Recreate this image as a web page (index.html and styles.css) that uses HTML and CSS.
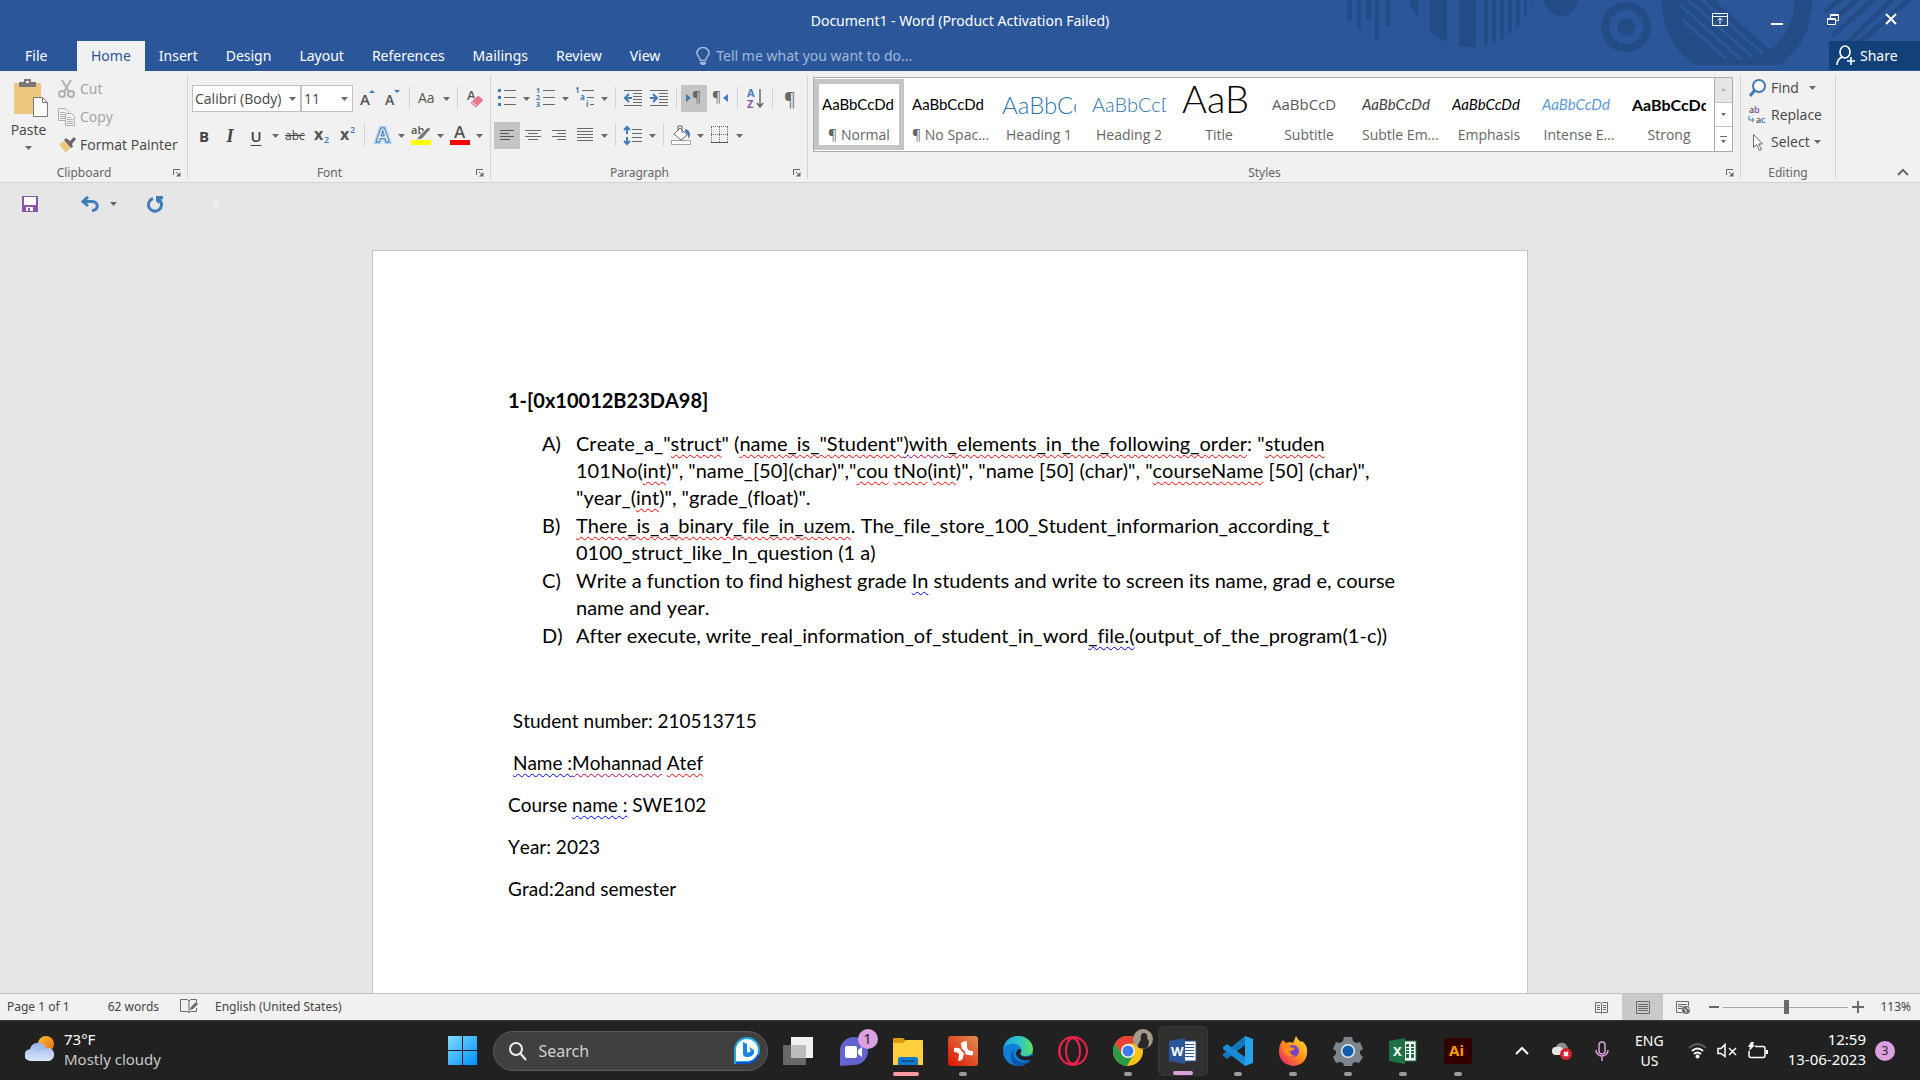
FILE: index.html
```html
<!DOCTYPE html>
<html lang="en">
<head>
    <meta charset="UTF-8">
    <meta name="viewport" content="width=device-width, initial-scale=1.0">
    <title>Document1 - Word</title>
    <link rel="stylesheet" href="styles.css">
</head>
<body>
    <!-- shared symbols -->
    <svg class="symbols" aria-hidden="true">
        <symbol id="arrow" viewBox="0 0 7 4"><path d="M0 0h7L3.500 4z" fill="currentColor"/></symbol>
        <symbol id="launcher" viewBox="0 0 8 8"><path d="M.5 6V.5H7M3 3l3 3" fill="none" stroke="currentColor"/><path d="M7.500 3v4.500H3z" fill="currentColor"/></symbol>
    </svg>

    <header class="top">
        <svg class="top-art" width="580" height="71" viewBox="1340 0 580 71" aria-hidden="true">
            <defs>
                <clipPath id="disc"><circle cx="1471" cy="-17" r="64"/></clipPath>
                <clipPath id="ring"><circle cx="1737" cy="3" r="58"/></clipPath>
                <clipPath id="cut"><rect x="1650" y="0" width="180" height="65"/></clipPath>
            </defs>
            <g fill="#244b86">
                <path d="M1347 0h5v20h-5zM1357 0h4v29h-4zM1366 0h5v20h-5zM1375 0h4v40h-4zM1386 0h4v26h-4z"/>
                <path clip-path="url(#disc)" d="M1407 0h11v60h-11zM1430 0h17v60h-17zM1459 0h17v60h-17zM1484 0h4v60h-4zM1492 0h4v60h-4zM1500 0h4v60h-4zM1508 0h4v60h-4zM1516 0h4v60h-4zM1524 0h3v60h-3zM1531 0h3v60h-3z"/>
                <circle cx="1561" cy="-1" r="17"/>
                <circle cx="1626" cy="27" r="9"/>
            </g>
            <g fill="none" stroke="#244b86">
                <circle cx="1626" cy="27" r="21" stroke-width="8"/>
                <circle cx="1737" cy="3" r="66" stroke-width="18" clip-path="url(#cut)"/>
                <path clip-path="url(#ring)" stroke-width="6" d="M1670-10l90 80M1684-10l90 80M1698-10l90 80M1656-10l90 80M1642-10l90 80"/>
                <path stroke-width="5" d="M1850-8l-26 20M1866-8l-40 34M1882-8l-50 44M1900-8l-52 50M1918-8l-60 52"/>
            </g>
        </svg>
        <div class="title-row">
            <h1 class="doc-title">Document1 - Word (Product Activation Failed)</h1>
            <div class="win-buttons">
                <button type="button" aria-label="Ribbon display options"><svg width="16" height="13"><path d="M.5.5h15v12H.5zM.5 3.500h15M8 11V5M5.500 7.500L8 5l2.500 2.500" fill="none" stroke="#fff"/></svg></button>
                <button type="button" aria-label="Minimize"><svg width="12" height="13"><path d="M0 10h12v2H0z" fill="#fff"/></svg></button>
                <button type="button" aria-label="Restore"><svg width="13" height="13"><path d="M.5 5.500h8v6h-8zM.5 6.500h8M3.500 5V1.500h8v6H9M3.500 2.500h8" fill="none" stroke="#fff"/></svg></button>
                <button type="button" aria-label="Close"><svg width="12" height="12"><path d="M1 1l10 10M11 1L1 11" stroke="#fff" stroke-width="2"/></svg></button>
            </div>
        </div>
        <div class="tab-row">
            <nav class="tabs">
                <a class="file" href="#">File</a>
                <a class="active" href="#">Home</a>
                <a href="#">Insert</a>
                <a href="#">Design</a>
                <a href="#">Layout</a>
                <a href="#">References</a>
                <a href="#">Mailings</a>
                <a href="#">Review</a>
                <a href="#">View</a>
            </nav>
            <label class="tell-me">
                <svg width="14" height="19" viewBox="0 0 14 19"><path d="M4.500 13.500c0-3-3.500-3.500-3.500-7.500a6 5.500 0 0 1 12 0c0 4-3.500 4.500-3.500 7.500z" fill="none" stroke="#a3b8d8" stroke-width="1.600"/><path d="M4 15h6v2H9v1H5v-1H4z" fill="#a3b8d8"/></svg>
                <input type="text" placeholder="Tell me what you want to do..." aria-label="Tell me what you want to do">
            </label>
            <button type="button" class="share">
                <svg width="20" height="22" viewBox="0 0 20 22"><g fill="none" stroke="#fff" stroke-width="1.600"><ellipse cx="9" cy="7" rx="5" ry="6"/><path d="M1 20c0-4 2-6.500 5-8M15 12v8M11 16h8"/></g></svg>
                Share
            </button>
        </div>
    </header>

    <section class="ribbon">
        <div class="group clipboard">
            <div class="group-body">
                <button type="button" class="paste">
                    <svg width="36" height="40" viewBox="0 0 36 40"><path d="M1 5h27v31H1z" fill="#eec77e"/><path d="M6 9V4h5V1h7v3h5v5z" fill="#787878"/><path d="M13 3h3v2h-3z" fill="#f1f1f1"/><path d="M20.500 19.500h9l5 5v14h-14z" fill="#fff" stroke="#787878"/><path d="M29.500 19.500v5h5" fill="none" stroke="#787878"/></svg>
                    <span>Paste</span>
                    <svg class="arrow"><use href="#arrow"/></svg>
                </button>
                <div class="stack">
                    <button type="button" class="row-btn off"><svg width="18" height="18" viewBox="0 0 18 18"><g fill="none" stroke="#b1b1b1" stroke-width="2"><path d="M4 0l7 12M13 0L6 12"/><circle cx="4" cy="14" r="3"/><circle cx="13" cy="14" r="3"/></g></svg>Cut</button>
                    <button type="button" class="row-btn off"><svg width="18" height="18" viewBox="0 0 18 18"><g fill="#f1f1f1" stroke="#b1b1b1"><path d="M.5.5h7l3 3v9H.500z"/><path d="M2 4.500h5M2 6.500h5M2 8.500h5M2 10.500h5"/><path d="M7.500 5.500h6l3 3v9h-9z"/><path d="M9 9.500h4M9 11.500h6M9 13.500h6M9 15.500h6"/></g></svg>Copy</button>
                    <button type="button" class="row-btn"><svg width="18" height="18" viewBox="0 0 18 18"><path d="M1 8l6-3 6 6-5 6z" fill="#eec77e"/><path d="M6 4l2-2 4 3 4-4 2 2-4 5 1 3-2 1z" fill="#696969"/></svg>Format Painter</button>
                </div>
            </div>
            <div class="group-label">Clipboard<button type="button" aria-label="Clipboard settings"><svg width="8" height="8"><use href="#launcher"/></svg></button></div>
        </div>

        <div class="group font">
            <div class="group-body rows">
                <div class="tools">
                    <span class="combo combo-font"><select aria-label="Font"><option>Calibri (Body)</option></select><svg class="arrow"><use href="#arrow"/></svg></span>
                    <span class="combo combo-size"><select aria-label="Font size"><option>11</option></select><svg class="arrow"><use href="#arrow"/></svg></span>
                    <button type="button" class="tool" aria-label="Grow font"><svg viewBox="0 0 26 27"><text x="7" y="20" class="glyph" font-size="15">A</text><path d="M16 8h6l-3-3z" fill="#3f7cb8"/></svg></button>
                    <button type="button" class="tool" aria-label="Shrink font"><svg viewBox="0 0 26 27"><text x="6" y="20" class="glyph" font-size="14">A</text><path d="M15 5h6l-3 3z" fill="#3f7cb8"/></svg></button>
                    <i class="sep"></i>
                    <button type="button" class="tool" aria-label="Change case"><svg viewBox="0 0 26 27"><text x="4" y="18" class="glyph thin" font-size="14">Aa</text></svg></button>
                    <button type="button" class="drop" aria-label="Change case options"><svg class="arrow"><use href="#arrow"/></svg></button>
                    <i class="sep"></i>
                    <button type="button" class="tool" aria-label="Clear formatting"><svg viewBox="0 0 26 27"><text x="5" y="15" class="glyph" font-size="13">A</text><path d="M8 18l8-8 6 5-8 8z" fill="#e8788d" stroke="#f1f1f1"/><path d="M10 17l5 4" stroke="#f1f1f1"/></svg></button>
                </div>
                <div class="tools">
                    <button type="button" class="tool bold">B</button>
                    <button type="button" class="tool italic">I</button>
                    <button type="button" class="tool under">U</button>
                    <button type="button" class="drop" aria-label="Underline options"><svg class="arrow"><use href="#arrow"/></svg></button>
                    <button type="button" class="tool strike">abc</button>
                    <button type="button" class="tool" aria-label="Subscript"><svg viewBox="0 0 26 27"><text x="6" y="18" class="glyph heavy" font-size="16">x</text><text x="16" y="21" font-size="9" font-weight="600" fill="#3f7cb8">2</text></svg></button>
                    <button type="button" class="tool" aria-label="Superscript"><svg viewBox="0 0 26 27"><text x="6" y="18" class="glyph heavy" font-size="16">x</text><text x="16" y="11" font-size="9" font-weight="600" fill="#3f7cb8">2</text></svg></button>
                    <i class="sep"></i>
                    <button type="button" class="tool" aria-label="Text effects"><svg viewBox="0 0 26 27"><text x="7" y="20" font-size="19" font-weight="700" fill="#fff" stroke="#b4d3f0" stroke-width="4">A</text><text x="7" y="20" font-size="19" font-weight="700" fill="#fff" stroke="#3f7cb8" stroke-width="1">A</text></svg></button>
                    <button type="button" class="drop" aria-label="Text effects options"><svg class="arrow"><use href="#arrow"/></svg></button>
                    <button type="button" class="tool" aria-label="Highlight"><svg viewBox="0 0 26 27"><text x="3" y="12" class="glyph" font-size="11">ab</text><path d="M11 14l9-9 3 2-9 10-6 1z" fill="#787878" stroke="#f1f1f1"/><path d="M3 18h20v5H3z" fill="#ff0"/></svg></button>
                    <button type="button" class="drop" aria-label="Highlight options"><svg class="arrow"><use href="#arrow"/></svg></button>
                    <button type="button" class="tool" aria-label="Font color"><svg viewBox="0 0 26 27"><text x="7" y="16" class="glyph" font-size="17">A</text><path d="M3 18h20v5H3z" fill="#f00"/></svg></button>
                    <button type="button" class="drop" aria-label="Font color options"><svg class="arrow"><use href="#arrow"/></svg></button>
                </div>
            </div>
            <div class="group-label">Font<button type="button" aria-label="Font settings"><svg width="8" height="8"><use href="#launcher"/></svg></button></div>
        </div>

        <div class="group paragraph">
            <div class="group-body rows">
                <div class="tools">
                    <button type="button" class="tool" aria-label="Bullets"><svg viewBox="0 0 26 27"><path d="M10 5.500h12M10 12.500h12M10 19.500h12" stroke="#696969"/><path d="M4 4h3v3H4zM4 11h3v3H4zM4 18h3v3H4z" fill="#3f7cb8"/></svg></button>
                    <button type="button" class="drop" aria-label="Bullets options"><svg class="arrow"><use href="#arrow"/></svg></button>
                    <button type="button" class="tool" aria-label="Numbering"><svg viewBox="0 0 26 27"><path d="M10 5.500h12M10 12.500h12M10 19.500h12" stroke="#696969"/><g fill="#3f7cb8" font-size="7" font-weight="700"><text x="3" y="8">1</text><text x="3" y="15">2</text><text x="3" y="22">3</text></g></svg></button>
                    <button type="button" class="drop" aria-label="Numbering options"><svg class="arrow"><use href="#arrow"/></svg></button>
                    <button type="button" class="tool" aria-label="Multilevel list"><svg viewBox="0 0 26 27"><path d="M10 5.500h12M15 12.500h7M18 19.500h4" stroke="#696969"/><g fill="#3f7cb8" font-size="8" font-weight="700"><text x="3" y="8">1</text><text x="8" y="15">a</text><text x="14" y="22">i</text></g></svg></button>
                    <button type="button" class="drop" aria-label="Multilevel list options"><svg class="arrow"><use href="#arrow"/></svg></button>
                    <i class="sep"></i>
                    <button type="button" class="tool" aria-label="Decrease indent"><svg viewBox="0 0 26 27"><path d="M4 5.500h18M13 8.500h9M13 11.500h9M13 14.500h9M13 17.500h9M4 20.500h18" stroke="#696969"/><path d="M12 13H6M9 9l-4 4 4 4" fill="none" stroke="#3f7cb8" stroke-width="2"/></svg></button>
                    <button type="button" class="tool" aria-label="Increase indent"><svg viewBox="0 0 26 27"><path d="M4 5.500h18M13 8.500h9M13 11.500h9M13 14.500h9M13 17.500h9M4 20.500h18" stroke="#696969"/><path d="M4 13h7M7 9l4 4-4 4" fill="none" stroke="#3f7cb8" stroke-width="2"/></svg></button>
                    <i class="sep"></i>
                    <button type="button" class="tool on" aria-label="Left to right"><svg viewBox="0 0 26 27"><path d="M5 9l5 4-5 4z" fill="#3f7cb8"/><text x="11" y="17" font-size="14" fill="#696969">¶</text></svg></button>
                    <button type="button" class="tool" aria-label="Right to left"><svg viewBox="0 0 26 27"><path d="M21 9l-5 4 5 4z" fill="#3f7cb8"/><text x="5" y="17" font-size="14" fill="#696969">¶</text></svg></button>
                    <i class="sep"></i>
                    <button type="button" class="tool" aria-label="Sort"><svg viewBox="0 0 26 27"><text x="5" y="12" font-size="11" font-weight="700" fill="#3f7cb8">A</text><text x="5" y="23" font-size="11" font-weight="700" fill="#8a55aa">Z</text><path d="M18 4v17M15 18l3 4 3-4" fill="none" stroke="#696969" stroke-width="1.500"/></svg></button>
                    <i class="sep"></i>
                    <button type="button" class="tool mark">¶</button>
                </div>
                <div class="tools">
                    <button type="button" class="tool on" aria-label="Align left"><svg viewBox="0 0 26 27"><path d="M6 8.500h14M6 11.500h9M6 14.500h14M6 17.500h10" stroke="#555"/></svg></button>
                    <button type="button" class="tool" aria-label="Center"><svg viewBox="0 0 26 27"><path d="M5 8.500h16M8 11.500h10M5 14.500h16M8 17.500h10" stroke="#696969"/></svg></button>
                    <button type="button" class="tool" aria-label="Align right"><svg viewBox="0 0 26 27"><path d="M6 8.500h14M11 11.500h9M6 14.500h14M11 17.500h9" stroke="#696969"/></svg></button>
                    <button type="button" class="tool" aria-label="Justify"><svg viewBox="0 0 26 27"><path d="M5 6.500h16M5 9.500h16M5 12.500h16M5 15.500h16M5 18.500h16" stroke="#696969"/></svg></button>
                    <button type="button" class="drop" aria-label="Justify options"><svg class="arrow"><use href="#arrow"/></svg></button>
                    <i class="sep"></i>
                    <button type="button" class="tool" aria-label="Line spacing"><svg viewBox="0 0 26 27"><path d="M12 7.500h10M12 11.500h10M12 15.500h10M12 19.500h10" stroke="#696969"/><path d="M7 5v7M4 8l3-3 3 3M7 15v7M4 19l3 3 3-3" fill="none" stroke="#3f7cb8" stroke-width="2"/></svg></button>
                    <button type="button" class="drop" aria-label="Line spacing options"><svg class="arrow"><use href="#arrow"/></svg></button>
                    <i class="sep"></i>
                    <button type="button" class="tool" aria-label="Shading"><svg viewBox="0 0 26 27"><path d="M6 12l6-6 7 7-6 5z" fill="#fff" stroke="#696969"/><path d="M10 9V4h4v7" fill="none" stroke="#696969"/><path d="M17 7c5 1 6 5 4 10-1-3-1-5-4-7z" fill="#3f7cb8"/><path d="M3.500 18.500h19v4h-19z" fill="#fff" stroke="#a0a0a0"/></svg></button>
                    <button type="button" class="drop" aria-label="Shading options"><svg class="arrow"><use href="#arrow"/></svg></button>
                    <button type="button" class="tool" aria-label="Borders"><svg viewBox="0 0 26 27"><path d="M4 4.500h17M4.500 5v16M20.500 5v16M4 12.500h17M12.500 5v16" stroke="#696969" stroke-dasharray="1 1"/><path d="M4 20.500h17" stroke="#555"/></svg></button>
                    <button type="button" class="drop" aria-label="Borders options"><svg class="arrow"><use href="#arrow"/></svg></button>
                </div>
            </div>
            <div class="group-label">Paragraph<button type="button" aria-label="Paragraph settings"><svg width="8" height="8"><use href="#launcher"/></svg></button></div>
        </div>

        <div class="group styles">
            <div class="group-body">
                <div class="gallery">
                    <button type="button" class="style selected"><span class="sample">AaBbCcDd</span><span class="name">¶ Normal</span></button>
                    <button type="button" class="style"><span class="sample">AaBbCcDd</span><span class="name">¶ No Spac...</span></button>
                    <button type="button" class="style"><span class="sample s-h1">AaBbCc</span><span class="name">Heading 1</span></button>
                    <button type="button" class="style"><span class="sample s-h2">AaBbCcD</span><span class="name">Heading 2</span></button>
                    <button type="button" class="style"><span class="sample s-title">AaB</span><span class="name">Title</span></button>
                    <button type="button" class="style"><span class="sample s-sub">AaBbCcD</span><span class="name">Subtitle</span></button>
                    <button type="button" class="style"><span class="sample s-subtle">AaBbCcDd</span><span class="name">Subtle Em...</span></button>
                    <button type="button" class="style"><span class="sample s-em">AaBbCcDd</span><span class="name">Emphasis</span></button>
                    <button type="button" class="style"><span class="sample s-intense">AaBbCcDd</span><span class="name">Intense E...</span></button>
                    <button type="button" class="style"><span class="sample s-strong">AaBbCcDd</span><span class="name">Strong</span></button>
                    <div class="gallery-nav">
                        <button type="button" class="up" aria-label="Previous styles" disabled><svg width="5" height="3" viewBox="0 0 5 3"><path d="M0 3h5L2.500 0z" fill="#b1b1b1"/></svg></button>
                        <button type="button" aria-label="Next styles"><svg width="5" height="3" viewBox="0 0 5 3"><path d="M0 0h5L2.500 3z" fill="#696969"/></svg></button>
                        <button type="button" aria-label="More styles"><svg width="7" height="7" viewBox="0 0 7 7"><path d="M0 0h7v1H0zM1 4h5L3.500 7z" fill="#696969"/></svg></button>
                    </div>
                </div>
            </div>
            <div class="group-label">Styles<button type="button" aria-label="Styles settings"><svg width="8" height="8"><use href="#launcher"/></svg></button></div>
        </div>

        <div class="group editing">
            <div class="group-body stack">
                <button type="button" class="row-btn"><svg width="19" height="18" viewBox="0 0 19 18"><circle cx="11" cy="7" r="6" fill="#fff" stroke="#3f7cb8" stroke-width="2"/><path d="M7 11l-5 6" stroke="#3f7cb8" stroke-width="3"/></svg>Find <svg class="arrow gap"><use href="#arrow"/></svg></button>
                <button type="button" class="row-btn"><svg width="19" height="18" viewBox="0 0 19 18"><g font-size="9" font-weight="600"><text x="1" y="7" fill="#555">a</text><text x="6" y="7" fill="#8a55aa">b</text><text x="8" y="17" fill="#555">a</text><text x="13" y="17" fill="#3f7cb8">c</text></g><path d="M1 10v4h5M4 12l2 2-2 2" fill="none" stroke="#3f7cb8"/></svg>Replace</button>
                <button type="button" class="row-btn"><svg width="19" height="18" viewBox="0 0 19 18"><path d="M5.500 1.500v13l3-3 3 6 2-1-3-5.500h4z" fill="#fff" stroke="#696969"/></svg>Select<svg class="arrow"><use href="#arrow"/></svg></button>
            </div>
            <div class="group-label">Editing</div>
        </div>
        <div class="collapse">
            <button type="button" aria-label="Collapse the ribbon"><svg width="12" height="8" viewBox="0 0 12 8"><path d="M1 7l5-5 5 5" fill="none" stroke="#696969" stroke-width="2"/></svg></button>
        </div>
    </section>

    <div class="quick-bar">
        <button type="button" aria-label="Save"><svg width="16" height="16"><path d="M0 0h16v16H0z" fill="#8a55aa"/><path d="M2 1h12v8H2zM4 11h7v4H4z" fill="#fff"/><path d="M6 12h2v3H6z" fill="#8a55aa"/></svg></button>
        <button type="button" class="undo" aria-label="Undo"><svg width="19" height="16" viewBox="0 0 19 16"><path d="M7 1L2 5.500 7 10M3 5.500h8c7 0 7 9 0 9" fill="none" stroke="#3f7cb8" stroke-width="3"/></svg></button>
        <button type="button" class="undo-more" aria-label="Undo list"><svg class="arrow"><use href="#arrow"/></svg></button>
        <button type="button" class="repeat" aria-label="Repeat"><svg width="17" height="17" viewBox="0 0 17 17"><path d="M6 2.500A6.500 6.500 0 1 0 12.500 4" fill="none" stroke="#3f7cb8" stroke-width="3"/><path d="M9 0h7v3l-3 1-1 4-3-3z" fill="#3f7cb8"/></svg></button>
        <button type="button" class="customize" aria-label="Customize toolbar"><svg width="6" height="7"><path d="M0 0h6v1H0zM0 3h6L3 6z" fill="#f8f8f8"/></svg></button>
    </div>

    <main class="workspace">
        <article class="page">
            <h2>1-[0x10012B23DA98]</h2>
            <ol>
                <li>Create_a_"<u class="spell">struct</u>" (<u class="spell">name_is_"Student"</u><u class="grammar">)</u><u class="both">with</u><u class="spell">_elements_in_the_following_order</u>: "<u class="spell">studen</u><br>
                    101No(<u class="spell">int</u>)", "name_[50](char)","<u class="spell">cou</u> <u class="spell">tNo</u>(<u class="spell">int</u>)", "name [50] (char)", "<u class="spell">courseName</u> [50] (char)",<br>
                    "year_(<u class="spell">int</u>)", "grade_(float)".</li>
                <li><u class="spell">There_is_a_binary_file_in_uzem</u>. The_file_store_100_Student_informarion_according_t<br>
                    0100_struct_like_In_question (1 a)</li>
                <li>Write a function to find highest grade <u class="grammar">In</u> students and write to screen its name, grad e, course<br>
                    name and year.</li>
                <li>After execute, write_real_information_of_student_in_word<u class="grammar">_file.(</u>output_of_the_program(1-c))</li>
            </ol>
            <p>&nbsp;Student number: 210513715</p>
            <p>&nbsp;<u class="grammar">Name :</u><u class="both">Mohannad</u> <u class="spell">Atef</u></p>
            <p>Course <u class="grammar">name :</u> SWE102</p>
            <p>Year: 2023</p>
            <p>Grad:2and semester</p>
        </article>
    </main>

    <footer class="status">
        <span class="pages">Page 1 of 1</span>
        <span class="words">62 words</span>
        <svg class="proof" width="18" height="16" viewBox="0 0 18 16"><path d="M9 13V2L7.500.500H.500v12h7L9 14l1.500-1.500h6V9M9 2l1.500-1.500h6V3" fill="none" stroke="#696969"/><path d="M10 11l1-3 5-5 2 2-5 5z" fill="#696969"/></svg>
        <span class="language">English (United States)</span>
        <div class="views">
            <button type="button" aria-label="Read mode"><svg width="13" height="13"><path d="M.5 1.500h5l1 1 1-1h5v10h-5l-1 1-1-1h-5zM6.500 2v10M2 4.500h3M2 6.500h3M2 8.500h3M8 4.500h3M8 6.500h3M8 8.500h3" fill="none" stroke="#696969"/></svg></button>
            <button type="button" class="on" aria-label="Print layout"><svg width="14" height="13"><path d="M.5.5h13v12H.5zM2 3.500h10M2 5.500h10M2 7.500h10M2 9.500h10" fill="none" stroke="#696969"/></svg></button>
            <button type="button" aria-label="Web layout"><svg width="15" height="13"><path d="M6 11.500H.5V.5h12V5M2 3.500h9M2 5.500h5M2 7.500h4" fill="none" stroke="#696969"/><circle cx="10" cy="9" r="4" fill="#696969"/><path d="M8 8l2 1v3M11 6l1 2h2" fill="none" stroke="#f1f1f1"/></svg></button>
        </div>
        <div class="zoom">
            <button type="button" aria-label="Zoom out"><svg width="10" height="12"><path d="M0 5h10v2H0z" fill="#696969"/></svg></button>
            <input type="range" min="0" max="100" value="51" aria-label="Zoom">
            <button type="button" aria-label="Zoom in"><svg width="12" height="12"><path d="M0 5h12v2H0zM5 0h2v12H5z" fill="#696969"/></svg></button>
            <span class="percent">113%</span>
        </div>
    </footer>

    <div class="taskbar">
        <a class="weather" href="#">
            <svg width="30" height="26" viewBox="0 0 30 26">
                <defs>
                    <linearGradient id="sun" x2="1" y2="1"><stop stop-color="#f6c030"/><stop offset="1" stop-color="#ec6a10"/></linearGradient>
                    <linearGradient id="cloud" x2="0" y2="1"><stop stop-color="#94b2e8"/><stop offset="1" stop-color="#dce8fb"/></linearGradient>
                </defs>
                <circle cx="21" cy="8" r="8" fill="url(#sun)"/>
                <path d="M6 25a6 6 0 0 1-1-12 8.500 8.500 0 0 1 16-1 6.500 6.500 0 0 1 3 13z" fill="url(#cloud)"/>
                <path d="M12 15c3-4 8-4 10-2" fill="none" stroke="#8aa8de"/>
            </svg>
            <span><b>73°F</b>Mostly cloudy</span>
        </a>
        <div class="apps">
            <button type="button" class="app start" aria-label="Start"><svg width="30" height="30"><defs><linearGradient id="win" x2="1" y2="1"><stop stop-color="#7edcff"/><stop offset="1" stop-color="#0090ff"/></linearGradient></defs><path d="M0 0h14v14H0zM15 0h14v14H15zM0 15h14v14H0zM15 15h14v14H15z" fill="url(#win)"/></svg></button>
            <label class="search">
                <svg width="20" height="20" viewBox="0 0 20 20"><circle cx="9" cy="8" r="6" fill="none" stroke="#eee" stroke-width="2"/><path d="M13 12l6 7" stroke="#eee" stroke-width="2"/></svg>
                <input type="text" placeholder="Search" aria-label="Search">
                <svg width="26" height="27" viewBox="0 0 26 27"><path d="M1 26V13A12 12 0 1 1 14 25H4z" fill="#fff" stroke="#19a7ea" stroke-width="2"/><path d="M2 26h12a12 12 0 0 0 10-8" fill="none" stroke="#1450d0" stroke-width="2"/><path d="M9 5l4 2v9l4-2-2-4 5 3c1 4-2 7-6 7s-5-1-5-4z" fill="#1884e8"/></svg>
            </label>
            <button type="button" class="app" aria-label="Task view"><svg width="30" height="30"><path d="M8 1h22v21H8z" fill="#f0f0f0"/><path d="M0 9h23v20H0z" fill="#686868"/><path d="M8 9h15v13H8z" fill="#bcbcbc"/></svg></button>
            <button type="button" class="app" aria-label="Chat"><svg width="30" height="30"><path d="M2 30V15A14 14 0 1 1 16 29z" fill="#6264cf"/><rect x="7" y="10" width="12" height="12" rx="2" fill="#fff"/><path d="M20 14l4-3v10l-4-3z" fill="#fff"/></svg><span class="count">1</span></button>
            <button type="button" class="app open-wide" aria-label="File Explorer"><svg width="30" height="30"><path d="M0 3q0-1 1-1h9l3 3v5H0z" fill="#dc9a08"/><path d="M0 7h10l3-3h16q1 0 1 1v24H0z" fill="#ffcf3f"/><path d="M5 29v-6q0-2 2-2h16q2 0 2 2v6z" fill="#0f7bcc"/><path d="M9 25h12" stroke="#0a5594" stroke-width="2"/></svg></button>
            <button type="button" class="app open" aria-label="Xmind"><svg width="30" height="30"><defs><linearGradient id="xm" x1="1" x2="0" y2="1"><stop stop-color="#e09050"/><stop offset="1" stop-color="#e01000"/></linearGradient></defs><rect width="30" height="30" rx="3" fill="url(#xm)"/><path d="M13 7q2-2 6-2v6q0 4 6 4v4q-6 1-9-2l-1 5q-1 3-5 3l1-6q0-3-5-3V12q5-1 8 2z" fill="#fff"/><path d="M13 13l4 4" stroke="#e85030" stroke-width="2"/></svg></button>
            <button type="button" class="app" aria-label="Edge"><svg width="30" height="30" viewBox="0 0 30 30"><defs><linearGradient id="eg" x2="1"><stop stop-color="#1fa0d8"/><stop offset=".5" stop-color="#2cc3cf"/><stop offset="1" stop-color="#5fdc5c"/></linearGradient></defs><circle cx="15" cy="15" r="15" fill="#0f7fd8"/><path d="M0 14C1 5 7 0 15 0c9 0 15 6 15 13 0 5-4 7-8 7-3 0-5-1-5-2 3-2 2-7-2-9C9 6 2 9 0 14z" fill="url(#eg)"/><path d="M11 13c-3 6 2 13 9 13 4 0 6-1 8-2-3 4-8 6-13 6-7-1-10-10-4-17z" fill="#0c58a8"/><path d="M17 18c3 4 9 3 12 1v4c-6 3-15 1-16-5 0-3 2-5 4-5 2 1 1 4 0 5z" fill="#202020"/></svg></button>
            <button type="button" class="app" aria-label="Opera"><svg width="30" height="30"><g fill="none" stroke="#f0204a" stroke-width="2"><circle cx="15" cy="15" r="14"/><ellipse cx="15" cy="15" rx="7" ry="13"/><ellipse cx="12" cy="15" rx="10" ry="13" stroke-width="1"/></g></svg></button>
            <button type="button" class="app open" aria-label="Chrome"><svg width="30" height="30" viewBox="0 0 30 30"><circle cx="15" cy="15" r="15" fill="#fbc116"/><path d="M2 7.500A15 15 0 0 1 28 7.500H15L9 19z" fill="#ea4335"/><path d="M2 7.500A15 15 0 0 0 14 30l7-12-12 1z" fill="#2b9b48"/><circle cx="15" cy="15" r="7" fill="#fff"/><circle cx="15" cy="15" r="5.500" fill="#3b7de8"/></svg><svg class="avatar" width="20" height="20" viewBox="0 0 20 20"><circle cx="10" cy="10" r="10" fill="#a49a8c"/><path d="M5 18c0-4 2-5 3-8-1-4 1-6 3-6s4 2 3 5l2 3-1 6c-3 2-7 2-10 0z" fill="#2c2724"/></svg></button>
            <button type="button" class="app current" aria-label="Word"><svg width="28" height="28"><path d="M14 4h13v20H14z" fill="#fff" stroke="#2b579a"/><path d="M15 7.500h10M15 10.500h10M15 13.500h10M15 16.500h10M15 19.500h10" stroke="#2b579a"/><path d="M0 4l16-3v26L0 24z" fill="#2b579a"/><text x="2" y="19" font-size="13" font-weight="700" fill="#fff">W</text></svg></button>
            <button type="button" class="app open" aria-label="Visual Studio Code"><svg width="30" height="30" viewBox="0 0 30 30"><path d="M22 0l8 3v24l-8 3z" fill="#27a3ee"/><path d="M22 0v9L4 23l-4-3v-2z" fill="#1277bd"/><path d="M22 30v-9L4 8l-4 3v2z" fill="#1a8ad4"/></svg></button>
            <button type="button" class="app open" aria-label="Firefox"><svg width="30" height="30" viewBox="0 0 30 30"><defs><linearGradient id="ff" x1="1" x2="0" y2="1"><stop stop-color="#fff23a"/><stop offset=".5" stop-color="#ff8a1c"/><stop offset="1" stop-color="#f0107c"/></linearGradient></defs><path d="M5 4l3 3q4-2 7 0l3-7q2 4 5 6l1-1q6 5 5 12-1 12-14 13Q1 28 1 15 1 8 5 4z" fill="url(#ff)"/><circle cx="15" cy="15" r="6" fill="#7542c8"/><path d="M4 9q6-2 8 2l5 1q-1 3-5 3 0 4 5 5-8 2-11-4z" fill="#ff8c1a"/></svg></button>
            <button type="button" class="app open" aria-label="Settings"><svg width="30" height="30" viewBox="0 0 30 30"><path d="M11 1h8l1 4 3 2 4-1 3 7-3 2v3l3 3-4 6-4-1-2 1-1 3h-8l-1-3-3-1-4 1-3-6 3-3v-3l-3-2 3-7 4 1 3-2z" fill="#7c858e"/><circle cx="15" cy="15" r="7" fill="#e8eef4"/><circle cx="15" cy="15" r="5.500" fill="#0d5cad"/></svg></button>
            <button type="button" class="app open" aria-label="Excel"><svg width="28" height="28"><path d="M14 4h13v20H14z" fill="#fff" stroke="#1f7145"/><path d="M17 7h3v14h-3zM22 7h3v14h-3z" fill="#1f7145"/><path d="M16 10.500h10M16 13.500h10M16 16.500h10" stroke="#fff"/><path d="M0 4l16-3v26L0 24z" fill="#1f7145"/><text x="4" y="19" font-size="13" font-weight="700" fill="#fff">X</text></svg></button>
            <button type="button" class="app open" aria-label="Illustrator"><svg width="28" height="28"><rect y="1" width="28" height="26" rx="4" fill="#330000"/><text x="5" y="19" font-size="15" font-weight="700" fill="#ff9a00">Ai</text></svg></button>
        </div>
        <div class="tray">
            <button type="button" aria-label="Hidden icons"><svg width="14" height="9"><path d="M1 8l6-6 6 6" fill="none" stroke="#fff" stroke-width="2"/></svg></button>
            <button type="button" class="cloud" aria-label="OneDrive"><svg width="20" height="18" viewBox="0 0 20 18"><path d="M4 13a4 4 0 0 1 0-8 6 6 0 0 1 11-1q2 3 1 9z" fill="#8c8c8c"/><path d="M4 13a4 4 0 0 1 0-8q5-2 8 3v5z" fill="#e4e4e4"/><circle cx="14" cy="12" r="6" fill="#d4202c"/><path d="M12 10l4 4M16 10l-4 4" stroke="#fff" stroke-width="2"/></svg></button>
            <button type="button" class="mic" aria-label="Microphone"><svg width="14" height="20"><g fill="none" stroke="#dc9fe0" stroke-width="1.500"><rect x="4" y="1" width="6" height="12" rx="3"/><path d="M1 9a6 6 0 0 0 12 0M7 15v5"/></g></svg></button>
            <button type="button" class="lang">ENG<br>US</button>
            <button type="button" class="net" aria-label="Network, sound and battery">
                <svg width="19" height="16" viewBox="0 0 19 16"><g fill="none" stroke-width="2"><path d="M1 5q8.500-8 17 0" stroke="#5a5a5a"/><path d="M4 8q5.500-5 11 0M6 11q3.500-3 7 0" stroke="#fff"/></g><circle cx="9.500" cy="13.500" r="2" fill="#fff"/></svg>
                <svg width="20" height="16" viewBox="0 0 20 16"><path d="M1 5.500h3l4-4v12l-4-3H1zM12 5l7 7M19 5l-7 7" fill="none" stroke="#fff" stroke-width="1.500"/></svg>
                <svg width="21" height="18" viewBox="0 0 21 18"><path d="M8 4.500h8q2 0 2 2v7q0 2-2 2H4q-2 0-2-2V9" fill="none" stroke="#fff" stroke-width="1.500"/><path d="M4 0h3L6 3h2L2 9l1-4H1z" fill="#fff"/><path d="M19 8h2v4h-2z" fill="#fff"/></svg>
            </button>
            <button type="button" class="clock">12:59<br>13-06-2023</button>
            <span class="notices">3</span>
        </div>
    </div>
</body>
</html>
```
FILE: styles.css
```css
* {
    margin: 0;
    padding: 0;
    box-sizing: border-box;
}

body {
    display: flex;
    flex-direction: column;
    height: 100vh;
    overflow: hidden;
    font-family: "Noto Sans", "Open Sans", sans-serif;
    font-size: 14px;
    line-height: 20px;
    color: #444;
    background-color: #e6e6e6;
}

button {
    font: inherit;
    color: inherit;
    background: none;
    border: none;
    white-space: nowrap;
}

a {
    color: inherit;
    text-decoration: none;
}

input,
select {
    font: inherit;
    color: inherit;
    background: none;
    border: none;
    outline: none;
    min-width: 0;
}

svg {
    flex: none;
    display: block;
}

.symbols {
    position: absolute;
    width: 0;
    height: 0;
}

.arrow {
    width: 7px;
    height: 4px;
    color: #696969;
}

/* Title bar and tabs */
.top {
    position: relative;
    flex: none;
    background-color: #2b579a;
    color: #fff;
}

.top-art {
    position: absolute;
    top: 0;
    right: 0;
}

.title-row {
    position: relative;
    display: flex;
    justify-content: center;
    height: 41px;
}

.doc-title {
    font-size: 14px;
    font-weight: 400;
    line-height: 41px;
}

.win-buttons {
    position: absolute;
    top: 0;
    right: 1px;
    display: flex;
}

.win-buttons button {
    display: flex;
    align-items: center;
    justify-content: center;
    width: 57px;
    height: 38px;
}

.tab-row {
    position: relative;
    display: flex;
    height: 30px;
}

.tabs {
    display: flex;
    line-height: 30px;
}

.tabs a {
    padding: 0 14px;
}

.tabs .file {
    width: 77px;
    padding: 0 0 0 25px;
}

.tabs .active {
    background-color: #f1f1f1;
    color: #2b579a;
}

.tell-me {
    display: flex;
    align-items: center;
    flex: 1;
    gap: 6px;
    padding-left: 22px;
}

.tell-me input {
    flex: 1;
}

.tell-me input::placeholder {
    color: #a3b8d8;
}

.share {
    display: flex;
    align-items: center;
    gap: 4px;
    width: 91px;
    height: 29px;
    padding-left: 7px;
    background-color: #124078;
}

/* Ribbon */
.ribbon {
    display: flex;
    flex: none;
    height: 112px;
    padding: 4px 0 3px;
    background-color: #f1f1f1;
    border-bottom: 1px solid #d2d2d2;
    font-family: "Open Sans", "Noto Sans", sans-serif;
}

.group {
    display: flex;
    flex-direction: column;
    border-right: 1px solid #d2d2d2;
}

.clipboard {
    width: 188px;
}

.font {
    width: 303px;
}

.paragraph {
    width: 317px;
}

.styles {
    flex: 1;
}

.editing {
    width: 95px;
}

.collapse {
    display: flex;
    align-items: flex-end;
    width: 84px;
    padding: 0 0 3px 61px;
}

.group-body {
    display: flex;
    flex: 1;
}

.group-label {
    position: relative;
    padding-right: 19px;
    font-family: "Noto Sans", "Open Sans", sans-serif;
    font-size: 12px;
    line-height: 12px;
    text-align: center;
    color: #666;
}

.editing .group-label {
    padding-right: 0;
}

.group-label button {
    position: absolute;
    right: 6px;
    bottom: 2px;
}

.paste {
    display: flex;
    flex-direction: column;
    align-items: center;
    width: 56px;
    padding: 3px 0 0 6px;
}

.paste span {
    margin: 2px 0 6px;
    padding-right: 5px;
}

.paste .arrow {
    margin-right: 5px;
}

.stack {
    display: flex;
    flex-direction: column;
}

.row-btn {
    display: flex;
    align-items: center;
    gap: 4px;
    height: 28px;
    padding-left: 2px;
}

.off {
    color: #a0a0a0;
}

.editing .stack {
    gap: 1px;
}

.editing .row-btn {
    height: 26px;
    padding-left: 7px;
}

.arrow.gap {
    margin-left: 6px;
}

.rows {
    flex-direction: column;
    gap: 10px;
    padding: 10px 0 0 3px;
}

.tools {
    display: flex;
    height: 27px;
}

.tool {
    width: 26px;
    height: 27px;
}

.tool svg {
    width: 26px;
    height: 27px;
    overflow: visible;
}

.tool.on {
    background-color: #c5c5c5;
}

.drop {
    display: flex;
    align-items: center;
    justify-content: center;
    width: 13px;
}

.sep {
    width: 1px;
    height: 22px;
    margin: 2px 4px;
    background-color: #d2d2d2;
}

.combo {
    display: flex;
    align-items: center;
    height: 27px;
    padding: 0 4px 0 2px;
    background-color: #fff;
    border: 1px solid #c0c0c0;
}

.combo select {
    appearance: none;
    flex: 1;
}

.combo-font {
    width: 109px;
    margin-left: 1px;
}

.combo-size {
    width: 52px;
}

.glyph {
    font-weight: 600;
    fill: #555;
}

.glyph.thin {
    font-weight: 400;
}

.glyph.heavy {
    font-weight: 700;
}

.bold {
    font-size: 15px;
    font-weight: 700;
}

.italic {
    font-family: "Liberation Serif", serif;
    font-size: 18px;
    font-style: italic;
    font-weight: 700;
}

.under {
    font-size: 15px;
    font-weight: 600;
    text-decoration: underline;
    text-underline-offset: 3px;
}

.strike {
    font-size: 12px;
    text-decoration: line-through;
}

.mark {
    font-size: 18px;
    color: #696969;
}

/* Styles gallery */
.styles .group-body {
    padding: 2px 7px 0 5px;
}

.gallery {
    display: flex;
    flex: 1;
    height: 75px;
    background-color: #fff;
    border: 1px solid #ababab;
}

.style {
    display: flex;
    flex-direction: column;
    flex: 1 1 0;
    min-width: 0;
    height: 71px;
    margin-top: 1px;
    padding: 0 3px;
    border: 5px solid transparent;
}

.style.selected {
    border-color: #c5c5c5;
}

.sample {
    flex: none;
    width: 100%;
    height: 40px;
    overflow: hidden;
    font-family: Lato, "Open Sans", sans-serif;
    font-size: 15px;
    line-height: 41px;
    color: #000;
    text-align: left;
}

.name {
    width: 100%;
    color: #666;
    line-height: 21px;
}

.s-h1 {
    font-size: 24px;
    font-weight: 300;
    color: #2e74b5;
}

.s-h2 {
    font-size: 20px;
    font-weight: 300;
    color: #2e74b5;
}

.s-title {
    font-size: 38px;
    font-weight: 300;
    line-height: 28px;
}

.s-sub {
    font-family: "Open Sans", sans-serif;
    color: #5a5a5a;
}

.s-subtle {
    font-style: italic;
    color: #404040;
}

.s-em {
    font-style: italic;
}

.s-intense {
    font-style: italic;
    color: #5b9bd5;
}

.s-strong {
    font-size: 16px;
    font-weight: 700;
}

.gallery-nav {
    display: flex;
    flex-direction: column;
    width: 18px;
    border-left: 1px solid #ababab;
}

.gallery-nav button {
    display: flex;
    align-items: center;
    justify-content: center;
    flex: 1;
    border-top: 1px solid #c5c5c5;
}

.gallery-nav .up {
    background-color: #e6e6e6;
    border-top: none;
}

/* Quick access toolbar */
.quick-bar {
    display: flex;
    align-items: center;
    flex: none;
    height: 42px;
    padding-left: 22px;
}

.undo {
    margin-left: 43px;
}

.undo-more {
    margin-left: 10px;
}

.repeat {
    margin-left: 30px;
}

.customize {
    margin-left: 49px;
}

/* Document */
.workspace {
    flex: 1;
    min-height: 0;
    overflow: hidden;
    padding: 25px 20px 0 0;
}

.page {
    max-width: 1156px;
    min-height: 100%;
    margin: 0 auto;
    padding: 136px 134px 0 135px;
    background-color: #fff;
    border: 1px solid #c6c6c6;
    border-bottom: none;
    font-family: Lato, "Open Sans", sans-serif;
    font-size: 19px;
    font-kerning: none;
    font-variant-ligatures: none;
    line-height: 27px;
    color: #000;
    white-space: nowrap;
}

.page h2 {
    font-size: 20px;
    margin-bottom: 16px;
}

.page ol {
    list-style: none;
    counter-reset: item;
    margin-bottom: 58px;
    font-size: 20px;
}

.page li {
    position: relative;
    counter-increment: item;
    margin-bottom: 1px;
    padding-left: 68px;
}

.page li::before {
    content: counter(item, upper-alpha) ")";
    position: absolute;
    left: 34px;
}

.page p {
    margin-bottom: 15px;
}

.page u {
    text-decoration: underline wavy 1px #f00;
    text-decoration-skip-ink: none;
    text-underline-offset: 3px;
}

.page .grammar {
    text-decoration-color: #00f;
}

.page .both {
    text-decoration-color: #c0004c;
}

/* Status bar */
.status {
    display: flex;
    align-items: center;
    flex: none;
    height: 27px;
    padding: 0 9px 0 7px;
    background-color: #f1f1f1;
    border-top: 1px solid #c0c0c0;
    font-size: 12px;
}

.words {
    margin-left: 38px;
}

.proof {
    margin: 0 17px 0 21px;
}

.views {
    display: flex;
    align-self: stretch;
    margin-left: auto;
}

.views button {
    display: flex;
    align-items: center;
    justify-content: center;
    width: 41px;
}

.views .on {
    background-color: #c9c9c9;
}

.zoom {
    display: flex;
    align-items: center;
    gap: 4px;
    margin-left: 5px;
}

.zoom input {
    appearance: none;
    width: 125px;
    height: 14px;
    background: linear-gradient(#a6a6a6, #a6a6a6) center / 100% 1px no-repeat;
}

.zoom input::-webkit-slider-thumb {
    appearance: none;
    width: 5px;
    height: 14px;
    background-color: #696969;
}

.percent {
    width: 43px;
    text-align: right;
}

/* Taskbar */
.taskbar {
    display: grid;
    grid-template-columns: 1fr auto 1fr;
    align-items: center;
    flex: none;
    height: 60px;
    background-color: #212121;
    border-top: 1px solid #3a3a3a;
    color: #fff;
}

.weather {
    display: flex;
    align-items: center;
    gap: 9px;
    padding: 0 0 3px 25px;
    font-size: 15px;
    color: #c8c8c8;
}

.weather b {
    display: block;
    font-weight: 400;
    color: #fff;
}

.apps {
    display: flex;
    align-items: center;
    gap: 5px;
}

.app {
    position: relative;
    display: flex;
    align-items: center;
    justify-content: center;
    width: 50px;
    height: 50px;
    border-radius: 5px;
}

.current {
    background-color: #303030;
    border: 1px solid #383838;
}

.open::after,
.open-wide::after,
.current::after {
    content: "";
    position: absolute;
    left: 21px;
    bottom: 0;
    width: 8px;
    height: 4px;
    border-radius: 2px;
    background-color: #9a9a9a;
}

.open-wide::after {
    left: 10px;
    width: 26px;
    background-color: #ff99a4;
}

.current::after {
    left: 14px;
    width: 20px;
    background-color: #dc9fe0;
}

.count,
.avatar {
    position: absolute;
    top: 3px;
    right: 0;
}

.count {
    width: 20px;
    border-radius: 50%;
    background-color: #dc9fe0;
    color: #222;
}

.search {
    display: flex;
    align-items: center;
    gap: 12px;
    width: 275px;
    height: 40px;
    padding: 0 7px 0 13px;
    border: 1px solid #5a5a5a;
    border-radius: 20px;
    background-color: #404040;
}

.search input {
    flex: 1;
    font-size: 16px;
}

.search input::placeholder {
    color: #d0d0d0;
}

.tray {
    display: flex;
    align-items: center;
    justify-content: flex-end;
    padding-right: 25px;
}

.cloud {
    margin-left: 23px;
}

.mic {
    margin-left: 23px;
}

.lang {
    margin-left: 26px;
    text-align: center;
}

.net {
    display: flex;
    align-items: center;
    gap: 10px;
    margin-left: 24px;
}

.clock {
    margin-left: 20px;
    padding-bottom: 3px;
    font-size: 15px;
    text-align: right;
}

.notices {
    width: 20px;
    margin-left: 9px;
    border-radius: 50%;
    background-color: #dc9fe0;
    color: #222;
    font-size: 12px;
    text-align: center;
}
```
